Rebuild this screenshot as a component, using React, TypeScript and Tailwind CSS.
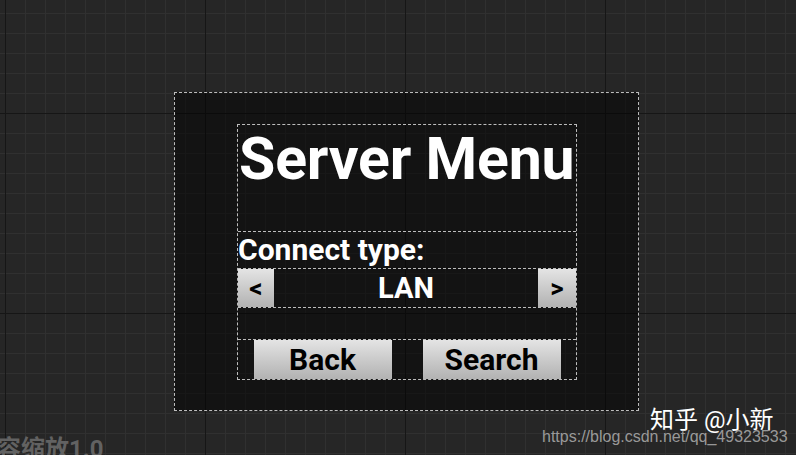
import React from "react";

const font = { fontFamily: "Roboto, 'Noto Sans CJK SC', sans-serif" };

function GrayButton({ label, className }: { label: string; className?: string }) {
  return (
    <div
      className={
        "flex h-full items-center justify-center bg-gradient-to-b from-[#e4e4e4] to-[#b2b2b2] font-bold leading-none text-black " +
        (className ?? "")
      }
    >
      {label}
    </div>
  );
}

export default function App() {
  return (
    <div
      style={font}
      className="relative h-[455px] w-[796px] overflow-hidden bg-[#262626] bg-[image:linear-gradient(to_right,#161616_1px,transparent_1px),linear-gradient(to_bottom,#161616_1px,transparent_1px),linear-gradient(to_right,#303030_1px,transparent_1px),linear-gradient(to_bottom,#303030_1px,transparent_1px)] bg-size-[200px_200px,200px_200px,20px_20px,20px_20px] bg-position-[5px_113px,5px_113px,5px_13px,5px_13px] pl-[174px] pt-[92px]"
    >
      {/* widget canvas */}
      <div className="box-border h-[319px] w-[465px] border border-dashed border-[#bdbdbd] bg-black/50 pl-[62px] pt-[31px]">
        <div className="box-border flex h-[256px] w-[340px] flex-col border border-dashed border-[#bdbdbd]">
          <div className="h-[107px] border-b border-dashed border-[#bdbdbd] pl-[1px]">
            <div className="whitespace-nowrap text-[59px] font-bold leading-[68px] tracking-[-0.2px] text-white">
              Server Menu
            </div>
          </div>
          <div className="flex h-[37px] items-center border-b border-dashed border-[#bdbdbd]">
            <span className="whitespace-nowrap text-[30px] font-bold leading-none text-white">Connect type:</span>
          </div>
          <div className="flex h-[39px] border-b border-dashed border-[#bdbdbd]">
            <GrayButton label="<" className="w-[36px] text-[26px]" />
            <div className="flex flex-1 items-center justify-center text-[29px] font-bold leading-none text-white">
              LAN
            </div>
            <GrayButton label=">" className="w-[38px] text-[26px]" />
          </div>
          <div className="h-[32px] border-b border-dashed border-[#bdbdbd]" />
          <div className="grid h-[39px] grid-cols-2">
            <div className="flex h-[39px] justify-center">
              <GrayButton label="Back" className="w-[138px] text-[30px]" />
            </div>
            <div className="flex h-[39px] justify-center">
              <GrayButton label="Search" className="w-[138px] text-[30px]" />
            </div>
          </div>
        </div>
      </div>

      {/* dpi scale label */}
      <div className="absolute left-[-3px] top-[434px] whitespace-nowrap text-[24px] font-bold leading-[30px] text-[#626262]">
        容缩放1.0
      </div>

      {/* watermark */}
      <div className="absolute left-[650px] top-[402px] text-[24px] text-white">知乎 @小新</div>
      <div
        className="absolute left-[542px] top-[425px] text-[16px] text-[#a8a8a8]/90"
        style={{ fontFamily: "'Liberation Sans', sans-serif" }}
      >
        https://blog.csdn.net/qq_49323533
      </div>
    </div>
  );
}
